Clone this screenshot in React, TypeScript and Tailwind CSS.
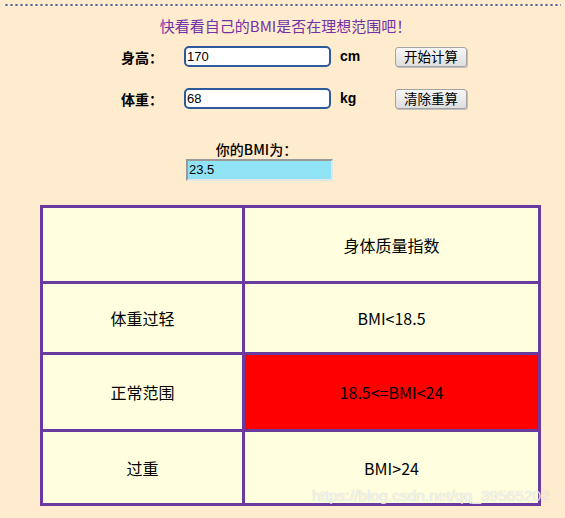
import React from "react";

const cjk = "font-['Noto_Sans_CJK_SC','Noto_Sans',sans-serif]";
const latin = "font-['Liberation_Sans','Noto_Sans_CJK_SC',sans-serif]";

function Button({ children }: { children: React.ReactNode }) {
  return (
    <button
      className={`${cjk} w-[72px] h-[20px] text-[13.5px] leading-none text-black rounded-[3px] border border-[#a3a3a3] bg-[linear-gradient(#f7f7f7,#dedede)] shadow-[1px_1px_0_#bdbdbd] flex items-center justify-center`}
    >
      {children}
    </button>
  );
}

function Row({ label, value, unit, btn }: { label: string; value: string; unit: string; btn: string }) {
  return (
    <div className="flex items-center h-[21px]">
      <div className={`${cjk} w-[63px] text-[14px] font-bold text-black leading-none`}>{label}</div>
      <div className={`${latin} w-[147px] h-[21px] border-2 border-[#2c5a9c] rounded-[5px] bg-white flex items-center pl-[1px] text-[13px] text-black`}>
        {value}
      </div>
      <div className={`${latin} ml-[9px] w-[55px] text-[14px] font-bold text-black`}>{unit}</div>
      <Button>{btn}</Button>
    </div>
  );
}

export default function App() {
  const rows: { a: string; b: string; h: string; red?: boolean }[] = [
    { a: "", b: "身体质量指数", h: "h-[73px]" },
    { a: "体重过轻", b: "BMI<18.5", h: "h-[68px]" },
    { a: "正常范围", b: "18.5<=BMI<24", h: "h-[74px]", red: true },
    { a: "过重", b: "BMI>24", h: "h-[71px]" },
  ];
  return (
    <div className="relative min-h-[518px] w-[565px] bg-[#ffebcd] overflow-hidden">
      <div className="mt-[4px] mx-[4px] h-[2px] bg-[radial-gradient(circle,#56679a_1px,transparent_1.3px)] bg-[length:5px_2px]" />
      <div className={`${cjk} mt-[10px] h-[20px] leading-[20px] text-center text-[15px] text-[#7432a4] pl-[6px]`}>
        快看看自己的BMI是否在理想范围吧！
      </div>
      <div className="mt-[10px] pl-[121px] flex flex-col gap-[21px]">
        <Row label="身高：" value="170" unit="cm" btn="开始计算" />
        <Row label="体重：" value="68" unit="kg" btn="清除重算" />
      </div>
      <div className="ml-[186px] mt-[31px] w-[147px] flex flex-col">
        <div className={`${cjk} h-[19px] leading-[19px] text-center text-[14px] font-medium text-black pr-[6px]`}>你的BMI为：</div>
        <div
          className={`${latin} h-[22px] border-2 border-t-[#999999] border-l-[#999999] border-b-[#e4e4e4] border-r-[#e4e4e4] bg-[#8fe3f5] flex items-center pl-[1px] text-[13px] text-black`}
        >
          23.5
        </div>
      </div>
      <div className="mt-[24px] ml-[40px] w-[501px] border-[3px] border-[#6a3aa0] bg-[#6a3aa0] grid grid-cols-[199px_293px] gap-[3px]">
        {rows.map((r, i) => (
          <React.Fragment key={i}>
            <div className={`${cjk} ${r.h} bg-[#ffffdf] flex items-center justify-center text-[16px] text-black`}>{r.a}</div>
            <div
              className={`${cjk} ${r.h} ${r.red ? "bg-[#ff0000]" : "bg-[#ffffdf]"} flex items-center justify-center text-[16px] text-black`}
            >
              {r.b}
            </div>
          </React.Fragment>
        ))}
      </div>
      <div
        className={`${latin} absolute left-[312px] top-[486px] text-[15.5px] leading-[20px] whitespace-nowrap text-white/80 [text-shadow:0_0_1px_rgba(120,120,120,0.5)]`}
      >
        https://blog.csdn.net/qq_39565202
      </div>
    </div>
  );
}
